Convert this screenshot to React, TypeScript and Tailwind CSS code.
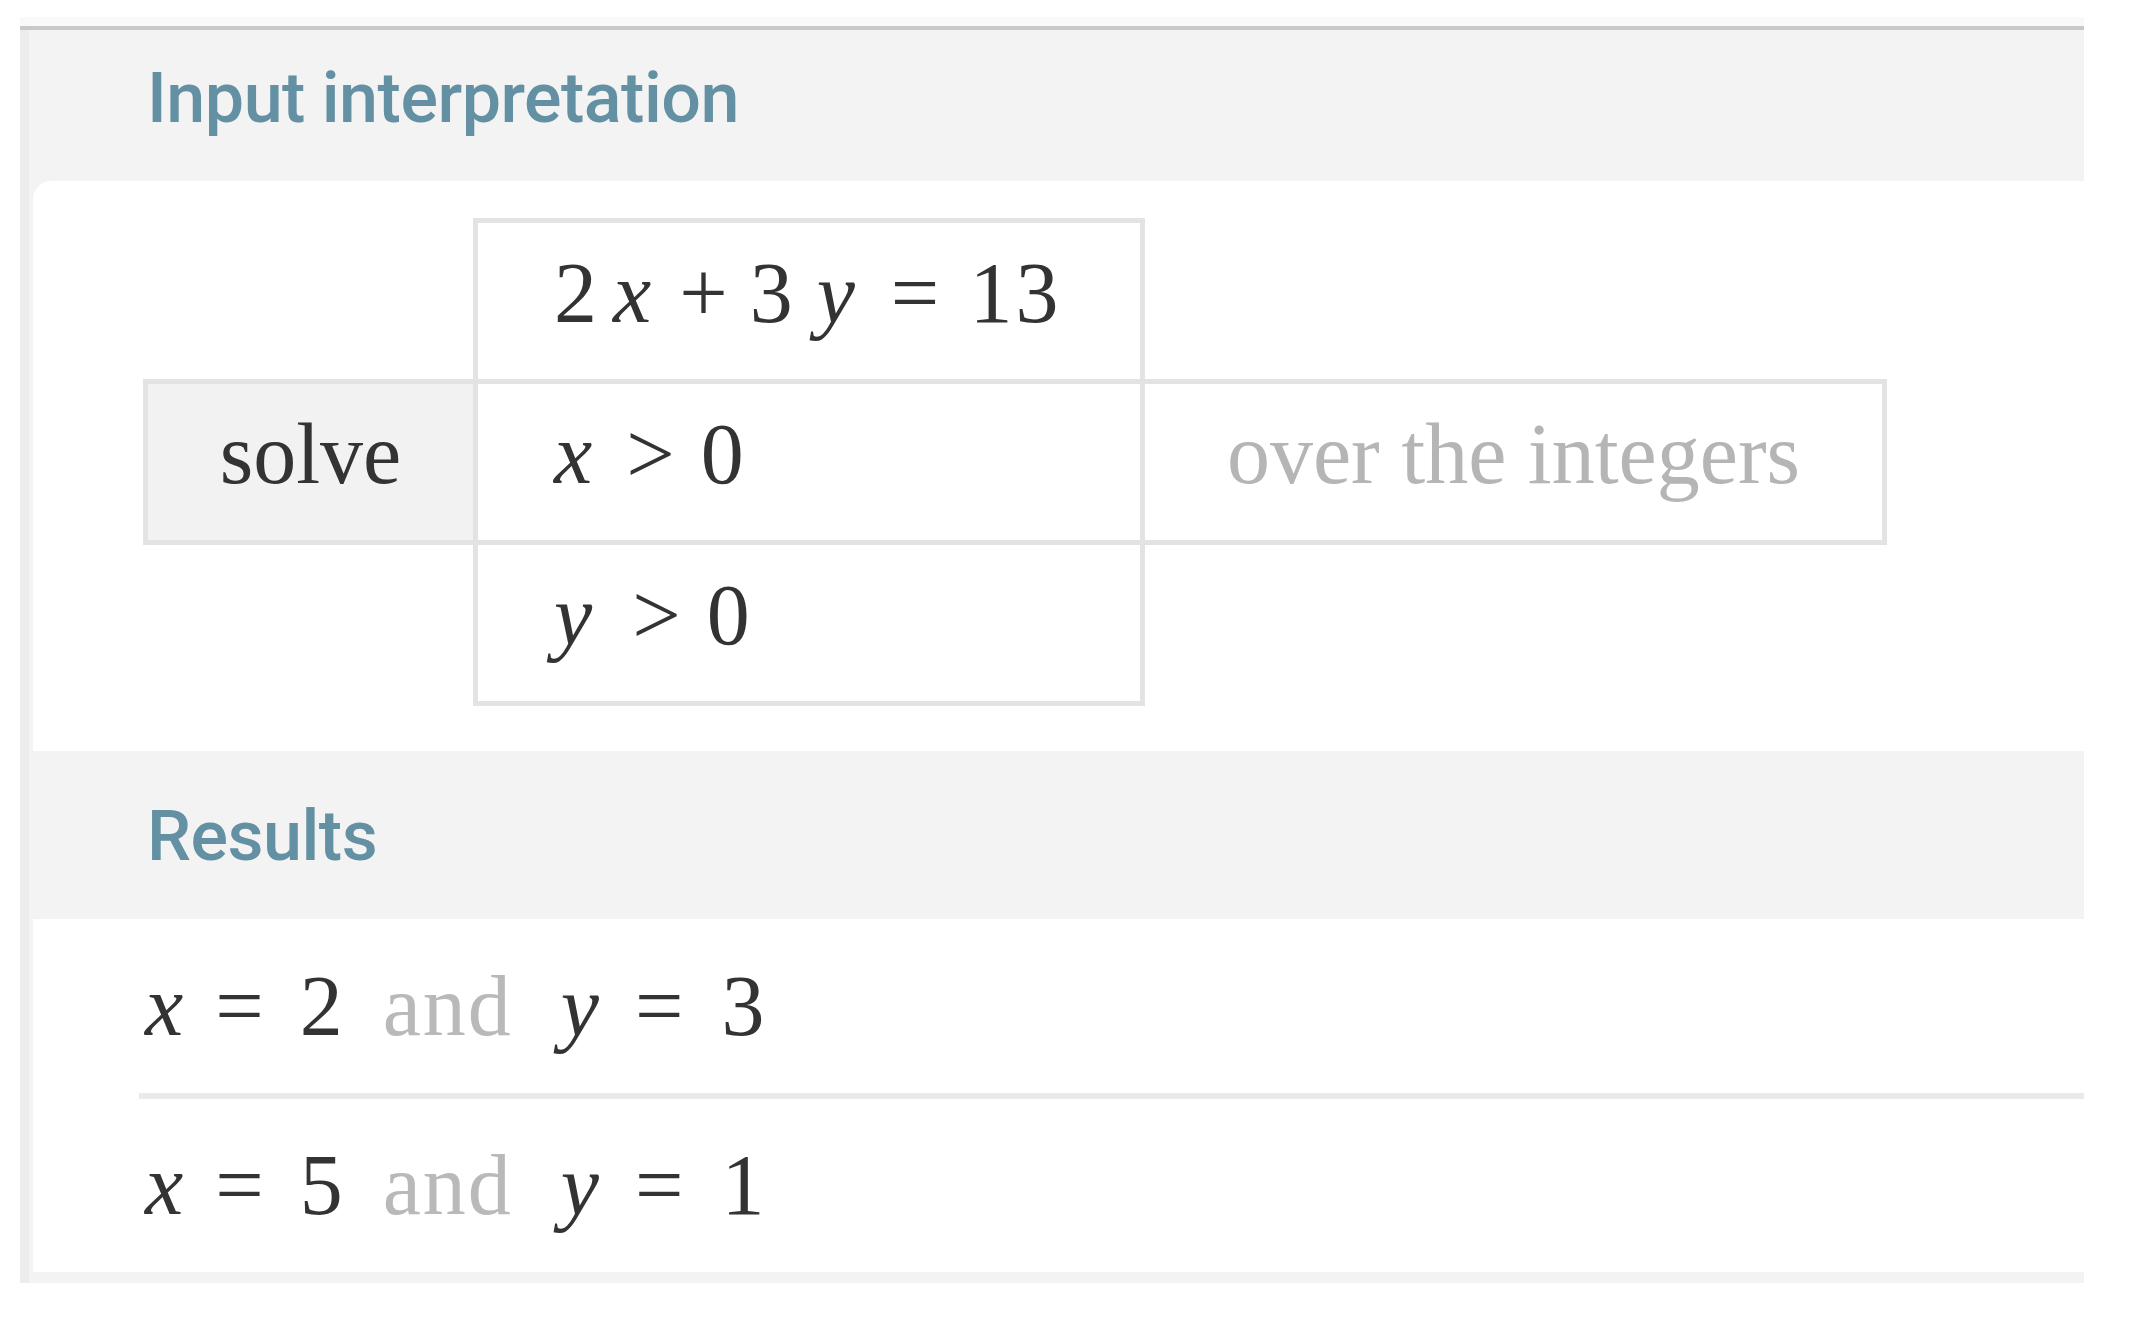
import { FC, ReactNode } from 'react';

const serif = "font-['Liberation_Serif','Times_New_Roman',serif]";

interface TokenProps {
  children: ReactNode;
  className?: string;
}

// a single piece of a typeset formula
const Tok: FC<TokenProps> = ({ children, className = '' }) => (
  <span className={`whitespace-pre ${className}`}>{children}</span>
);

const Heading = ({ children, className }: { children: ReactNode; className: string }) => (
  <div
    className={`bg-[#f3f3f3] pl-[118px] font-['Roboto',sans-serif] text-[70px] leading-none font-medium text-[#6390a2] tracking-[-0.5px] ${className}`}>
    {children}
  </div>
);

const Cell = ({ children, className = '' }: { children: ReactNode; className?: string }) => (
  <div className={`h-[156px] flex items-center pb-[16px] ${className}`}>{children}</div>
);

const ResultRow = ({ xv, yv }: { xv: string; yv: string }) => (
  <div className="flex-1 flex items-center pl-[112px]">
    <div className={`flex items-baseline text-[86px] leading-none text-[#333] ${serif}`}>
      <Tok className="italic">x</Tok>
      <Tok className="ml-[32px]">=</Tok>
      <Tok className="ml-[36px]">{xv}</Tok>
      <Tok className="ml-[40px] text-[#b9b9b9] tracking-[2px]">and</Tok>
      <Tok className="ml-[48px] italic">y</Tok>
      <Tok className="ml-[36px]">=</Tok>
      <Tok className="ml-[38px]">{yv}</Tok>
    </div>
  </div>
);

const App = () => {
  return (
    <div className="min-h-screen bg-white pt-[17px] pl-[20px] pr-[45px]">
      <div className="h-[9px] bg-[#f8f9fa]" />
      <div className="h-[4px] bg-[#c9c9c9]" />
      <div className="border-l-[9px] border-[#ececec] bg-[#f3f3f3]">
        <Heading className="h-[151px] pt-[33px]">Input interpretation</Heading>

        <div className="ml-[4px] h-[570px] bg-white rounded-tl-[18px] pt-[37px] pl-[110px]">
          <div className={`flex items-center text-[86px] leading-none text-[#333] ${serif}`}>
            <div className="w-[330px] h-[166px] border-y-[5px] border-l-[5px] border-[#e3e3e3] bg-[#f2f2f2] flex items-center justify-center pb-[16px]">
              solve
            </div>
            <div className="w-[672px] border-[5px] border-[#e3e3e3]">
              <Cell className="pl-[76px]">
                <Tok>2</Tok>
                <Tok className="ml-[16px] italic">x</Tok>
                <Tok className="ml-[28px]">+</Tok>
                <Tok className="ml-[22px]">3</Tok>
                <Tok className="ml-[24px] italic">y</Tok>
                <Tok className="ml-[36px]">=</Tok>
                <Tok className="ml-[30px] tracking-[3px]">13</Tok>
              </Cell>
              <Cell className="pl-[76px] border-t-[5px] border-[#e3e3e3] h-[161px]">
                <Tok className="italic">x</Tok>
                <Tok className="ml-[34px]">&gt;</Tok>
                <Tok className="ml-[26px]">0</Tok>
              </Cell>
              <Cell className="pl-[76px] border-t-[5px] border-[#e3e3e3] h-[161px]">
                <Tok className="italic">y</Tok>
                <Tok className="ml-[40px]">&gt;</Tok>
                <Tok className="ml-[26px]">0</Tok>
              </Cell>
            </div>
            <div className="w-[742px] h-[166px] border-y-[5px] border-r-[5px] border-[#e3e3e3] flex items-center justify-center pb-[16px] text-[#b5b5b5]">
              over the integers
            </div>
          </div>
        </div>

        <Heading className="h-[168px] pt-[50px]">Results</Heading>

        <div className="ml-[4px] h-[353px] bg-white flex flex-col">
          <ResultRow xv="2" yv="3" />
          <div className="ml-[106px] h-[6px] bg-[#eaeaea]" />
          <ResultRow xv="5" yv="1" />
        </div>
        <div className="h-[11px]" />
      </div>
    </div>
  );
};

export default App;
